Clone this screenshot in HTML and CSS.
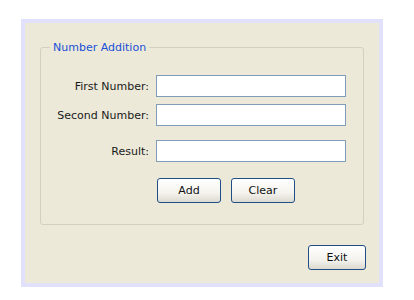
FILE: index.html
```html
<!DOCTYPE html>
<html lang="en">
<head>
  <meta charset="UTF-8" />
  <title>Number Addition</title>
  <link rel="stylesheet" href="styles.css">
</head>
<body>

  <!-- Window -->
  <div class="window">
    <fieldset class="group">
      <legend>Number Addition</legend>

      <div class="form">
        <label for="first">First Number:</label>
        <input id="first" type="text" />

        <label for="second">Second Number:</label>
        <input id="second" type="text" />

        <label for="result" class="result-label">Result:</label>
        <input id="result" type="text" class="result-input" />

        <div class="buttons">
          <button>Add</button>
          <button>Clear</button>
        </div>
      </div>
    </fieldset>

    <div class="actions">
      <button class="exit">Exit</button>
    </div>
  </div>

</body>
</html>
```

FILE: styles.css
```css
* {
  box-sizing: border-box;
}

body {
  margin: 0;
  background: #fff;
  font-family: 'DejaVu Sans', sans-serif;
  font-size: 11px;
  color: #1a1a1a;
}

/* Window frame */
.window {
  display: flex;
  flex-direction: column;
  width: 362px;
  height: 268px;
  margin: 19px 0 0 21px;
  padding: 18px 15px 13px;
  background: #ece9d8;
  border: 4px solid #e1e1fb;
}

/* Group box */
.group {
  margin: 0;
  padding: 0 0 21px;
  border: 1px solid #d3d0c0;
  border-radius: 3px;
}

.group legend {
  margin-left: 9px;
  padding: 0 3px;
  color: #1a4fd6;
}

.form {
  display: grid;
  grid-template-columns: 108px 190px;
  column-gap: 7px;
  row-gap: 7px;
  align-items: center;
  margin-top: 21px;
}

.form label {
  text-align: right;
}

.form input {
  height: 22px;
  border: 1px solid #7f9db9;
  background: #fff;
  outline: none;
}

.result-label,
.result-input {
  margin-top: 7px;
}

.buttons {
  grid-column: 2;
  display: flex;
  gap: 10px;
  margin-top: 9px;
  margin-left: 1px;
}

/* XP style buttons */
button {
  width: 64px;
  height: 25px;
  padding: 0;
  font-family: inherit;
  font-size: 11px;
  color: #111;
  background: linear-gradient(#ffffff, #f4f3ee 60%, #dcdad0);
  border: 1px solid #1f4f86;
  border-radius: 3px;
}

.actions {
  display: flex;
  justify-content: flex-end;
  margin-top: auto;
  margin-right: -2px;
}

.exit {
  width: 58px;
}
```
